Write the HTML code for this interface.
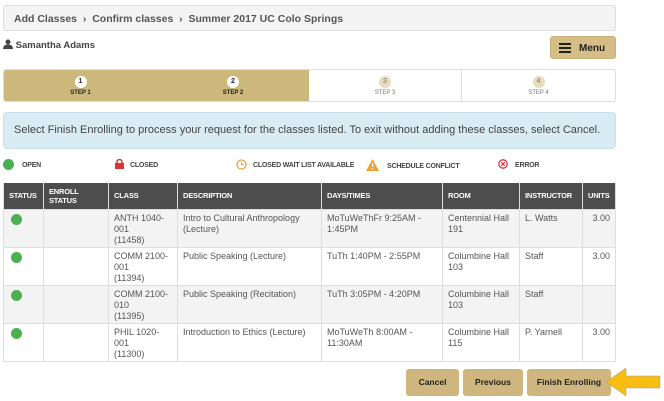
<!DOCTYPE html>
<html><head><meta charset="utf-8"><style>
*{box-sizing:border-box;margin:0;padding:0}
body{width:664px;height:401px;background:#fff;font-family:"Liberation Sans",Arial,sans-serif;color:#333;position:relative;overflow:hidden}
.abs{position:absolute}
.bc{left:3px;top:5px;width:613px;height:26px;background:#f4f4f4;border:1px solid #ddd;border-radius:3px;font-size:10.5px;font-weight:bold;color:#555;padding:7px 10px;white-space:nowrap}
.name{left:3px;top:39px;font-size:9.5px;font-weight:bold;color:#444}
.menu{left:550px;top:36px;width:66px;height:23px;background:#d5be86;border:1px solid #c9b27a;border-radius:3px;font-size:10px;font-weight:bold;color:#222;padding:6px 0 0 28px}
.steps{left:3px;top:69px;width:613px;height:33px;border:1px solid #ddd;border-radius:3px;display:flex;overflow:hidden}
.st{flex:0 0 auto;text-align:center;font-size:6px;padding-top:6px}
.st .c{width:12px;height:12px;border-radius:50%;margin:0 auto 2px;font-size:7px;line-height:12px}
.info{left:3px;top:112px;width:613px;height:37px;background:#d9ecf4;border:1px solid #c6e1ed;border-radius:4px;font-size:11px;color:#444;padding:11px 10px;white-space:nowrap}
.lg{top:159px;font-size:7px;font-weight:bold;color:#444;letter-spacing:-0.2px;white-space:nowrap}
table{position:absolute;left:3px;top:183px;width:613px;border-collapse:collapse;font-size:9px;color:#555}
th{background:#4d4d4d;color:#fff;font-size:7.5px;font-weight:bold;text-align:left;padding:3px 5px;height:26px;border:1px solid #ddd;border-top:none;line-height:9px;letter-spacing:-0.2px}
td{border:1px solid #ddd;vertical-align:top;padding:3px 5px 1px;line-height:11px}
tr.g td{background:#f3f3f3}
.dot{width:11px;height:11px;border-radius:50%;background:#4caf50;display:inline-block;margin-left:2px;margin-top:1px}
.btn{top:369px;height:27px;background:#cfb67e;border-radius:3px;font-size:8.5px;font-weight:bold;color:#222;text-align:center;line-height:27px}
</style></head><body>
<div class="abs bc">Add Classes &nbsp;›&nbsp; Confirm classes &nbsp;›&nbsp; Summer 2017 UC Colo Springs</div>
<div class="abs name"><svg width="10" height="10" viewBox="0 0 10 10" style="vertical-align:-1px"><circle cx="5" cy="3" r="2.5" fill="#444"/><path d="M0 10 Q0 5.5 5 5.5 Q10 5.5 10 10Z" fill="#444"/></svg> Samantha Adams</div>
<div class="abs menu"><svg class="abs" style="left:8px;top:6px" width="12" height="10"><rect y="0" width="12" height="2" fill="#222"/><rect y="4" width="12" height="2" fill="#222"/><rect y="8" width="12" height="2" fill="#222"/></svg>Menu</div>
<div class="abs steps">
<div class="st" style="width:153px;background:#cdb87c;font-weight:bold;color:#222"><div class="c" style="background:#fff">1</div>STEP 1</div>
<div class="st" style="width:152px;background:#cdb87c;font-weight:bold;color:#222"><div class="c" style="background:#fff">2</div>STEP 2</div>
<div class="st" style="width:153px;color:#777;border-right:1px solid #ddd"><div class="c" style="background:#e8dcbc">3</div>STEP 3</div>
<div class="st" style="width:153px;color:#777"><div class="c" style="background:#e8dcbc">4</div>STEP 4</div>
</div>
<div class="abs info">Select Finish Enrolling to process your request for the classes listed. To exit without adding these classes, select Cancel.</div>
<div class="abs lg" style="left:3px"><span class="dot" style="vertical-align:-3px;margin:0 8px 0 0"></span>OPEN</div>
<div class="abs lg" style="left:115px"><svg width="9" height="10" style="vertical-align:-2px;margin-right:6px"><rect y="4" width="9" height="6" fill="#d9343a"/><path d="M2 4.5V3a2.5 2.5 0 0 1 5 0v1.5" stroke="#d9343a" stroke-width="1.5" fill="none"/></svg>CLOSED</div>
<div class="abs lg" style="left:236px"><svg width="11" height="11" style="vertical-align:-3px;margin-right:6px"><circle cx="5.5" cy="5.5" r="4.5" stroke="#f0a040" stroke-width="1.3" fill="none"/><path d="M5.5 3V5.5H7.5" stroke="#f0a040" stroke-width="1" fill="none"/></svg>CLOSED WAIT LIST AVAILABLE</div>
<div class="abs lg" style="left:366px"><svg width="13" height="12" style="vertical-align:-3px;margin-right:8px"><path d="M6.5 0L13 12H0Z" fill="#f0a030"/><rect x="6" y="4" width="1.2" height="4" fill="#fff"/><rect x="6" y="9" width="1.2" height="1.2" fill="#fff"/></svg>SCHEDULE CONFLICT</div>
<div class="abs lg" style="left:498px"><svg width="10" height="10" style="vertical-align:-2px;margin-right:7px"><circle cx="5" cy="5" r="4.2" stroke="#d9343a" stroke-width="1.3" fill="none"/><path d="M3.3 3.3L6.7 6.7M6.7 3.3L3.3 6.7" stroke="#d9343a" stroke-width="1.3"/></svg>ERROR</div>
<table>
<tr><th style="width:40px">STATUS</th><th style="width:65px">ENROLL STATUS</th><th style="width:69px">CLASS</th><th style="width:144px">DESCRIPTION</th><th style="width:121px">DAYS/TIMES</th><th style="width:77px">ROOM</th><th style="width:63px">INSTRUCTOR</th><th>UNITS</th></tr>
<tr class="g" style="height:38px"><td><span class="dot"></span></td><td></td><td>ANTH 1040-<br>001<br>(11458)</td><td>Intro to Cultural Anthropology<br>(Lecture)</td><td>MoTuWeThFr 9:25AM -<br>1:45PM</td><td>Centennial Hall<br>191</td><td>L. Watts</td><td style="text-align:right">3.00</td></tr>
<tr style="height:38px"><td><span class="dot"></span></td><td></td><td>COMM 2100-<br>001<br>(11394)</td><td>Public Speaking (Lecture)</td><td>TuTh 1:40PM - 2:55PM</td><td>Columbine Hall<br>103</td><td>Staff</td><td style="text-align:right">3.00</td></tr>
<tr class="g" style="height:37px"><td><span class="dot"></span></td><td></td><td>COMM 2100-<br>010<br>(11395)</td><td>Public Speaking (Recitation)</td><td>TuTh 3:05PM - 4:20PM</td><td>Columbine Hall<br>103</td><td>Staff</td><td></td></tr>
<tr style="height:37px"><td><span class="dot"></span></td><td></td><td>PHIL 1020-<br>001<br>(11300)</td><td>Introduction to Ethics (Lecture)</td><td>MoTuWeTh 8:00AM -<br>11:30AM</td><td>Columbine Hall<br>115</td><td>P. Yarnell</td><td style="text-align:right">3.00</td></tr>
</table>
<div class="abs btn" style="left:406px;width:53px">Cancel</div>
<div class="abs btn" style="left:463px;width:60px">Previous</div>
<div class="abs btn" style="left:527px;width:84px">Finish Enrolling</div>
<svg class="abs" style="left:604px;top:366px" width="58" height="32"><path d="M2 16L22 2V10H56V22H22V30Z" fill="#f7bd12" stroke="#999" stroke-width="0.5"/></svg>
</body></html>
